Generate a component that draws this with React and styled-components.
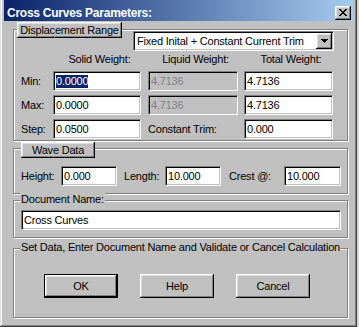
import React from 'react';
import styled, { createGlobalStyle } from 'styled-components';

const GlobalStyle = createGlobalStyle`
  html, body {
    margin: 0;
    padding: 0;
  }
  body {
    width: 359px;
    height: 327px;
    overflow: hidden;
    background: #d6d6d6;
    font-family: "Liberation Sans", Arial, sans-serif;
    font-size: 11px;
    letter-spacing: -0.2px;
    color: #000;
  }
`;

const Window = styled.div`
  box-sizing: border-box;
  width: 357px;
  height: 331px;
  margin-top: -4px;
  padding: 4px 4px 4px 4px;
  background: #c0c0c0;
  box-shadow: inset -1px -1px #404040, inset 1px 1px #dfdfdf,
    inset -2px -2px #808080, inset 2px 2px #fff;
  display: flex;
  flex-direction: column;
`;

const Caption = styled.div`
  box-sizing: border-box;
  height: 21px;
  padding: 4px 2px 0 3px;
  display: flex;
  align-items: center;
  justify-content: space-between;
  background: linear-gradient(to right, #0a246a, #a6caf0);
`;

const CaptionText = styled.span`
  color: #fff;
  font-weight: bold;
  font-size: 12px;
  letter-spacing: -0.25px;
`;

const raised = `
  background: #c0c0c0;
  box-shadow: inset -1px -1px #000, inset 1px 1px #fff,
    inset -2px -2px #808080, inset 2px 2px #dfdfdf;
`;

const sunken = `
  border: 1px solid;
  border-color: #808080 #fff #fff #808080;
  box-shadow: inset 1px 1px #000, inset -1px -1px #c0c0c0;
`;

const CloseButton = styled.div`
  ${raised}
  width: 16px;
  height: 14px;
  display: flex;
  align-items: center;
  justify-content: center;
`;

const Body = styled.div`
  display: flex;
  flex-direction: column;
  padding-left: 9px;
`;

const Group = styled.div`
  position: relative;
  box-sizing: border-box;
  width: 335px;
  height: ${(p) => p.$h}px;
  margin-top: ${(p) => p.$mt}px;
  padding: ${(p) => p.$pad};
  border: 1px solid #808080;
  box-shadow: inset 1px 1px #fff, 1px 1px #fff;
`;

const LegendButton = styled.div`
  ${raised}
  position: absolute;
  left: ${(p) => p.$left}px;
  top: ${(p) => p.$top}px;
  box-sizing: border-box;
  width: ${(p) => p.$w}px;
  height: 16px;
  display: flex;
  align-items: center;
  justify-content: center;
  line-height: 13px;
`;

const LegendText = styled.span`
  position: absolute;
  left: 6px;
  top: -8px;
  padding: 0 1px;
  line-height: 13px;
  white-space: nowrap;
  background: #c0c0c0;
`;

const TopRow = styled.div`
  display: flex;
  justify-content: flex-end;
`;

const Select = styled.div`
  ${sunken}
  box-sizing: border-box;
  width: 201px;
  height: 20px;
  background: #fff;
  display: flex;
  align-items: center;
  padding-left: 3px;
`;

const SelectText = styled.span`
  flex: 1;
  white-space: nowrap;
`;

const ArrowButton = styled.div`
  ${raised}
  width: 16px;
  height: 16px;
  margin-right: 1px;
  display: flex;
  align-items: center;
  justify-content: center;
`;

const Grid = styled.div`
  display: grid;
  grid-template-columns: 32px 95px 96px 89px;
  grid-template-rows: 16px 20px 20px 20px;
  row-gap: 4px;
`;

const Header = styled.div`
  width: ${(p) => p.$w}px;
  padding-left: 5px;
  box-sizing: border-box;
  text-align: center;
  align-self: center;
  line-height: 13px;
  margin-top: 1px;
`;

const RowLabel = styled.div`
  align-self: center;
  line-height: 13px;
  white-space: nowrap;
`;

const Field = styled.div`
  ${sunken}
  box-sizing: border-box;
  width: ${(p) => p.$w}px;
  height: 20px;
  padding-left: 2px;
  display: flex;
  align-items: center;
  background: ${(p) => (p.$disabled ? '#c0c0c0' : '#fff')};
  color: ${(p) => (p.$disabled ? '#808080' : '#000')};
  white-space: nowrap;
`;

const Selected = styled.span`
  background: #0a246a;
  color: #fff;
  line-height: 13px;
`;

const FlexRow = styled.div`
  display: flex;
  align-items: center;
`;

const InlineLabel = styled.span`
  width: ${(p) => p.$w}px;
  margin-left: ${(p) => p.$ml || 0}px;
  line-height: 13px;
  white-space: nowrap;
`;

const ButtonRow = styled.div`
  display: flex;
  gap: 22px;
  padding-left: 30px;
`;

const PushButton = styled.div`
  ${raised}
  box-sizing: border-box;
  width: 74px;
  height: 24px;
  display: flex;
  align-items: center;
  justify-content: center;
  ${(p) =>
    p.$default &&
    `
    border: 1px solid #000;
    box-shadow: inset -1px -1px #000, inset 1px 1px #fff,
      inset -2px -2px #808080, inset 2px 2px #dfdfdf;
  `}
`;

const CloseGlyph = () => (
  <svg width="8" height="7" viewBox="0 0 8 7" shapeRendering="crispEdges">
    <path
      fill="#000"
      d="M0 0h2v1H0zM6 0h2v1H6zM1 1h2v1H1zM5 1h2v1H5zM2 2h4v1H2zM3 3h2v1H3zM2 4h4v1H2zM1 5h2v1H1zM5 5h2v1H5zM0 6h2v1H0zM6 6h2v1H6z"
    />
  </svg>
);

const DownArrow = () => (
  <svg width="7" height="4" viewBox="0 0 7 4" shapeRendering="crispEdges">
    <path fill="#000" d="M0 0h7v1H0zM1 1h5v1H1zM2 2h3v1H2zM3 3h1v1H3z" />
  </svg>
);

export default function App() {
  return (
    <>
      <GlobalStyle />
      <Window>
        <Caption>
          <CaptionText>Cross Curves Parameters:</CaptionText>
          <CloseButton>
            <CloseGlyph />
          </CloseButton>
        </Caption>
        <Body>
          <Group $h={112} $mt={8} $pad="1px 13px 0 7px">
            <LegendButton $left={3} $top={-8} $w={105}>
              Displacement Range
            </LegendButton>
            <TopRow>
              <Select>
                <SelectText>Fixed Inital + Constant Current Trim</SelectText>
                <ArrowButton>
                  <DownArrow />
                </ArrowButton>
              </Select>
            </TopRow>
            <Grid>
              <span />
              <Header $w={88}>Solid Weight:</Header>
              <Header $w={90}>Liquid Weight:</Header>
              <Header $w={89}>Total Weight:</Header>

              <RowLabel>Min:</RowLabel>
              <Field $w={88}>
                <Selected>0.0000</Selected>
              </Field>
              <Field $w={90} $disabled>
                4.7136
              </Field>
              <Field $w={89}>4.7136</Field>

              <RowLabel>Max:</RowLabel>
              <Field $w={88}>0.0000</Field>
              <Field $w={90} $disabled>
                4.7136
              </Field>
              <Field $w={89}>4.7136</Field>

              <RowLabel>Step:</RowLabel>
              <Field $w={88}>0.0500</Field>
              <RowLabel>Constant Trim:</RowLabel>
              <Field $w={89}>0.000</Field>
            </Grid>
          </Group>

          <Group $h={46} $mt={7} $pad="17px 0 0 7px">
            <LegendButton $left={7} $top={-7} $w={74}>
              Wave Data
            </LegendButton>
            <FlexRow>
              <InlineLabel $w={40}>Height:</InlineLabel>
              <Field $w={56}>0.000</Field>
              <InlineLabel $w={41} $ml={7}>
                Length:
              </InlineLabel>
              <Field $w={56}>10.000</Field>
              <InlineLabel $w={55} $ml={8}>
                Crest @:
              </InlineLabel>
              <Field $w={57}>10.000</Field>
            </FlexRow>
          </Group>

          <Group $h={38} $mt={6} $pad="9px 0 0 7px">
            <LegendText>Document Name:</LegendText>
            <Field $w={320}>Cross Curves</Field>
          </Group>

          <Group $h={70} $mt={10} $pad="25px 0 0 0">
            <LegendText>
              Set Data, Enter Document Name and Validate or Cancel Calculation
            </LegendText>
            <ButtonRow>
              <PushButton $default>OK</PushButton>
              <PushButton>Help</PushButton>
              <PushButton>Cancel</PushButton>
            </ButtonRow>
          </Group>
        </Body>
      </Window>
    </>
  );
}
